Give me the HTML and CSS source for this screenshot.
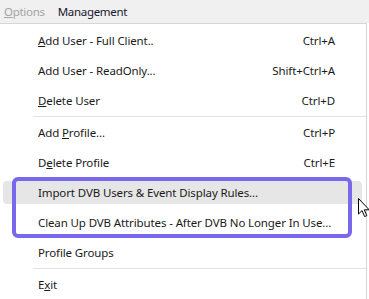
FILE: index.html
```html
<!DOCTYPE html>
<html lang="en">
<head>
    <meta charset="UTF-8">
    <title>Management Menu</title>
    <link rel="stylesheet" href="styles.css">
</head>
<body>
    <div class="menubar">
        <span class="menubar-item disabled"><u>O</u>ptions</span>
        <span class="menubar-item">Management</span>
    </div>
    <div class="menu">
        <div class="item"><span><u>A</u>dd User - Full Client..</span><span class="key">Ctrl+A</span></div>
        <div class="item"><span>Add User - ReadOnly...</span><span class="key">Shift+Ctrl+A</span></div>
        <div class="item"><span><u>D</u>elete User</span><span class="key">Ctrl+D</span></div>
        <div class="sep"></div>
        <div class="item"><span>Add <u>P</u>rofile...</span><span class="key">Ctrl+P</span></div>
        <div class="item"><span>D<u>e</u>lete Profile</span><span class="key">Ctrl+E</span></div>
        <div class="item hover"><span>Import DVB Users &amp; Event Display Rules...</span></div>
        <div class="item"><span>Clean Up DVB Attributes - After DVB No Longer In Use...</span></div>
        <div class="item"><span>Profile Groups</span></div>
        <div class="sep"></div>
        <div class="item"><span>E<u>x</u>it</span></div>
    </div>
    <!-- annotation box + mouse pointer drawn over the menu -->
    <div class="callout"></div>
    <svg class="pointer" width="13" height="20" viewBox="0 0 13 20">
        <path d="M0.5 0.5 L0.5 16 L4 12.6 L6.6 18.6 L8.8 17.6 L6.3 11.8 L11.2 11.8 Z" fill="#fff" stroke="#000" stroke-width="1"/>
    </svg>
</body>
</html>
```

FILE: styles.css
```css
body, html {
    margin: 0;
    padding: 0;
    height: 100%;
    overflow: hidden;
    background-color: #ffffff;
    font-family: 'Noto Sans', 'Open Sans', sans-serif;
    font-size: 11.5px;
    letter-spacing: -0.12px;
    color: #1a1a1a;
}
.menubar {
    height: 23px;
    background-color: #f0f0f0;
    display: flex;
    align-items: center;
    gap: 13px;
    padding-left: 4px;
}
.menubar-item {
    color: #1b1530;
    letter-spacing: -0.3px;
}
.menubar-item.disabled {
    color: #a3a3a3;
}
.menu {
    width: 367px;
    min-height: 280px;
    border-top: 1px solid #d6d6d6;
    border-right: 1px solid #d6d6d6;
    padding-top: 1px;
    box-sizing: border-box;
}
.item {
    position: relative;
    height: 30px;
    display: flex;
    align-items: center;
    justify-content: space-between;
    padding: 0 31px 0 38px;
    white-space: nowrap;
}
.item span {
    position: relative;
}
.item.hover::before {
    content: "";
    position: absolute;
    top: 4px;
    bottom: 3px;
    left: 3px;
    right: 4px;
    background-color: #e6e6e6;
    border-radius: 4px;
}
.key {
    color: #1a1a1a;
}
.sep {
    height: 1px;
    margin: 1px 0 0 33px;
    background-color: #e3e3e3;
}
.callout {
    position: absolute;
    left: 12px;
    top: 177px;
    width: 332px;
    height: 53px;
    border: 4px solid #7868ee;
    border-radius: 6px;
}
.pointer {
    position: absolute;
    left: 358px;
    top: 198px;
}
```
